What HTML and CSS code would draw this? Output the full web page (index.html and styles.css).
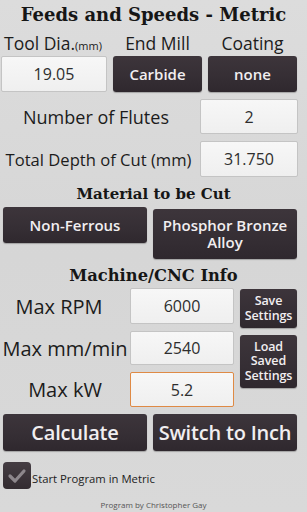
FILE: index.html
```html
<!DOCTYPE html>
<html>
<head>
<meta charset="utf-8">
<link rel="stylesheet" href="styles.css">
</head>
<body>
<div class="screen">
  <h1 class="title">Feeds and Speeds - Metric</h1>

  <div class="tool-labels">
    <div class="lbl lbl-left">Tool Dia.<span class="unit">(mm)</span></div>
    <div class="lbl">End Mill</div>
    <div class="lbl">Coating</div>
  </div>
  <div class="tool-row">
    <div class="field">19.05</div>
    <div class="btn btn-md">Carbide</div>
    <div class="btn btn-md">none</div>
  </div>

  <div class="pair-row">
    <div class="lbl lbl-flutes">Number of Flutes</div>
    <div class="field">2</div>
  </div>
  <div class="pair-row pair-row-b">
    <div class="lbl lbl-sm">Total Depth of Cut (mm)</div>
    <div class="field">31.750</div>
  </div>

  <h2 class="section">Material to be Cut</h2>
  <div class="mat-row">
    <div class="btn btn-md mat-a">Non-Ferrous</div>
    <div class="btn btn-md mat-b">Phosphor Bronze<br>Alloy</div>
  </div>

  <h2 class="section section-b">Machine/CNC Info</h2>
  <div class="machine">
    <div class="machine-fields">
      <div class="m-row m-row1">
        <div class="lbl lbl-lg lbl-rpm">Max RPM</div>
        <div class="field">6000</div>
      </div>
      <div class="m-row m-row2">
        <div class="lbl lbl-lg">Max mm/min</div>
        <div class="field">2540</div>
      </div>
      <div class="m-row m-row3">
        <div class="lbl lbl-lg">Max kW</div>
        <div class="field field-focus">5.2</div>
      </div>
    </div>
    <div class="machine-btns">
      <div class="btn btn-sm save">Save<br>Settings</div>
      <div class="btn btn-sm load">Load<br>Saved<br>Settings</div>
    </div>
  </div>

  <div class="action-row">
    <div class="btn btn-lg">Calculate</div>
    <div class="btn btn-lg">Switch to Inch</div>
  </div>

  <div class="check-row">
    <div class="checkbox">
      <svg width="20" height="16" viewBox="0 0 20 16"><path d="M3 8 L8 13 L17 3" fill="none" stroke="#8d878c" stroke-width="3.2" stroke-linecap="round" stroke-linejoin="round"/></svg>
    </div>
    <div class="check-label">Start Program in Metric</div>
  </div>

  <div class="footer">Program by Christopher Gay</div>
</div>
</body>
</html>
```
FILE: styles.css
```css
html, body {
  margin: 0;
  padding: 0;
}
body {
  width: 307px;
  height: 512px;
  overflow: hidden;
  background: linear-gradient(180deg, #dcdcdc 0%, #d6d6d6 50%, #d9d9d9 100%);
  font-family: "Open Sans", "Noto Sans", "DejaVu Sans", sans-serif;
  color: #1c1c1c;
}
.screen {
  display: flex;
  flex-direction: column;
  width: 307px;
  height: 512px;
}
.title {
  margin: 0;
  height: 30px;
  line-height: 30px;
  text-align: center;
  font-family: "DejaVu Serif", serif;
  font-weight: bold;
  font-size: 18px;
  color: #161616;
}
.tool-labels {
  display: grid;
  grid-template-columns: 106px 89px 89px;
  column-gap: 6px;
  padding-left: 1px;
  height: 26px;
  align-items: center;
}
.tool-labels .lbl { text-align: center; font-size: 17.5px; }
.tool-labels .lbl-left { text-align: left; padding-left: 3px; }
.lbl {
  font-size: 17px;
  color: #1c1c1c;
  white-space: nowrap;
}
.unit { font-size: 11px; }
.tool-row {
  display: grid;
  grid-template-columns: 106px 89px 89px;
  column-gap: 6px;
  padding-left: 1px;
  height: 36px;
}
.field {
  display: flex;
  align-items: center;
  justify-content: center;
  background: linear-gradient(180deg, #f7f7f7, #efefef);
  border: 1px solid #c4c4c4;
  border-radius: 2px;
  box-sizing: border-box;
  font-size: 16px;
  color: #2e2e2e;
}
.field-focus {
  border: 1.5px solid #df8a45;
}
.btn {
  display: flex;
  align-items: center;
  justify-content: center;
  text-align: center;
  background: linear-gradient(180deg, #3d353b 0%, #352e34 60%, #2f282e 100%);
  border-radius: 3px;
  box-shadow: 0 1px 1px rgba(0,0,0,0.25);
  color: #f1eef0;
  font-weight: bold;
  box-sizing: border-box;
}
.btn-md { font-size: 15px; line-height: 17px; font-weight: 600; }
.btn-sm { font-size: 12.5px; line-height: 14.5px; font-weight: 600; letter-spacing: -0.1px; }
.btn-lg { font-size: 20px; font-weight: 600; letter-spacing: -0.2px; }
.pair-row {
  display: grid;
  grid-template-columns: 197px 98px;
  column-gap: 3px;
  margin-top: 7px;
  height: 35px;
}
.pair-row-b { height: 36px; }
.pair-row .lbl {
  display: flex;
  align-items: center;
  justify-content: center;
}
.lbl-flutes { font-size: 18px; padding-right: 5px; }
.lbl-sm { font-size: 16.6px; }
.section {
  margin: 0;
  height: 30px;
  line-height: 34px;
  text-align: center;
  font-family: "DejaVu Serif", serif;
  font-weight: bold;
  font-size: 15px;
  color: #161616;
}
.mat-row {
  display: grid;
  grid-template-columns: 144px 144px;
  column-gap: 6px;
  padding-left: 3px;
  height: 52px;
  align-items: start;
}
.mat-a { height: 36px; }
.mat-b { height: 50px; margin-top: 2px; }
.section-b {
  height: 29px;
  line-height: 33px;
  margin-top: 0;
  font-size: 16.3px;
}
.machine {
  display: flex;
  column-gap: 6px;
}
.machine-fields {
  display: flex;
  flex-direction: column;
  row-gap: 7px;
}
.m-row {
  display: grid;
  grid-template-columns: 130px 104px;
}
.m-row1 { height: 36px; }
.m-row2 { height: 34px; }
.m-row3 { height: 35px; }
.m-row .lbl {
  display: flex;
  align-items: center;
  justify-content: center;
}
.lbl-lg { font-size: 20px; }
.m-row .lbl-rpm { padding-right: 12px; }
.machine-btns {
  display: flex;
  flex-direction: column;
  row-gap: 7px;
  padding-top: 1px;
}
.save { width: 57px; height: 39px; }
.load { width: 57px; height: 53px; }
.action-row {
  display: grid;
  grid-template-columns: 144px 144px;
  column-gap: 6px;
  padding-left: 3px;
  margin-top: 7px;
  height: 37px;
}
.check-row {
  display: flex;
  align-items: center;
  margin-top: 11px;
  padding-left: 3px;
  height: 27px;
}
.checkbox {
  width: 28px;
  height: 27px;
  border-radius: 4px;
  background: linear-gradient(180deg, #453d43, #332c31);
  display: flex;
  align-items: center;
  justify-content: center;
}
.check-label {
  margin-left: 1px;
  font-size: 11.3px;
  color: #222;
  padding-top: 6px;
}
.footer {
  margin-top: 10px;
  text-align: center;
  font-size: 8px;
  color: #555;
}
```
